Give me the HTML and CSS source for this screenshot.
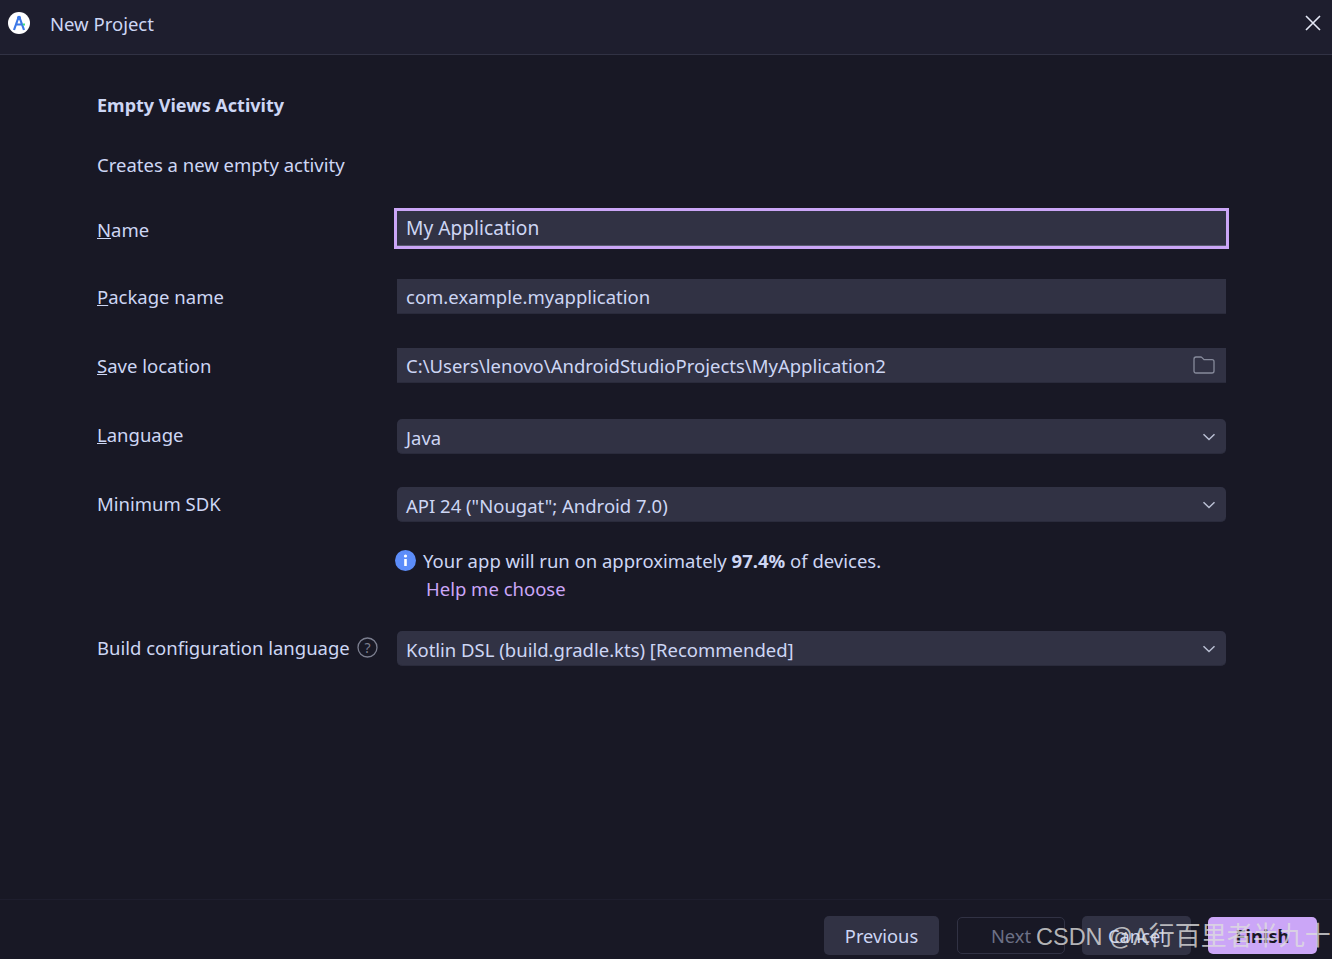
FILE: index.html
```html
<!DOCTYPE html>
<html lang="en">
<head>
    <meta charset="UTF-8">
    <meta name="viewport" content="width=device-width, initial-scale=1.0">
    <title>New Project</title>
    <link rel="stylesheet" href="styles.css">
</head>
<body>

    <div class="window">
        <!-- Title bar -->
        <div class="titlebar">
            <svg class="logo" width="22" height="22" viewBox="0 0 22 22">
                <circle cx="11" cy="11" r="11" fill="#fff"/>
                <path d="M11 4L6 18M11 4l5 14M8 12.500h6" fill="none" stroke="#3b78e7" stroke-width="2.200"/>
                <circle cx="11" cy="6" r="2" fill="#3b78e7"/>
                <path d="M14.500 11.500h2.500v2h-2z" fill="#3ddc84"/>
            </svg>
            <span class="title">New Project</span>
            <svg class="close" width="16" height="16" viewBox="0 0 16 16">
                <path d="M1 1l14 14M15 1L1 15" stroke="#e4e8f6" stroke-width="1.600" fill="none"/>
            </svg>
        </div>

        <!-- Form -->
        <div class="content">
            <h1>Empty Views Activity</h1>
            <p class="desc">Creates a new empty activity</p>

            <div class="row row-name">
                <label><u>N</u>ame</label>
                <div class="field focused">My Application</div>
            </div>
            <div class="row row-package">
                <label><u>P</u>ackage name</label>
                <div class="field">com.example.myapplication</div>
            </div>
            <div class="row row-save">
                <label><u>S</u>ave location</label>
                <div class="field">
                    <span>C:\Users\lenovo\AndroidStudioProjects\MyApplication2</span>
                    <svg width="22" height="18" viewBox="0 0 22 18">
                        <path d="M1 3.200C1 2 1.800 1 3 1h4.600c.6 0 1 .2 1.400.6L11 3.600h8c1.200 0 2 .8 2 2V15c0 1.200-.8 2-2 2H3c-1.200 0-2-.8-2-2z" fill="none" stroke="#868a9b" stroke-width="1.300"/>
                    </svg>
                </div>
            </div>
            <div class="row row-language">
                <label><u>L</u>anguage</label>
                <div class="field select">
                    <span>Java</span>
                    <svg class="chevron" width="14" height="8" viewBox="0 0 14 8"><path d="M1.500 1.200L7 6.500l5.500-5.300" fill="none" stroke="#b9bfd3" stroke-width="1.500"/></svg>
                </div>
            </div>
            <div class="row row-sdk">
                <label>Minimum SDK</label>
                <div class="field select">
                    <span>API 24 ("Nougat"; Android 7.0)</span>
                    <svg class="chevron" width="14" height="8" viewBox="0 0 14 8"><path d="M1.500 1.200L7 6.500l5.500-5.300" fill="none" stroke="#b9bfd3" stroke-width="1.500"/></svg>
                </div>
            </div>

            <div class="info">
                <div class="info-line">
                    <svg width="21" height="21" viewBox="0 0 21 21">
                        <circle cx="10.500" cy="10.500" r="10.500" fill="#5c8dfa"/>
                        <rect x="9.200" y="9" width="2.600" height="7" fill="#fff"/>
                        <circle cx="10.500" cy="6" r="1.600" fill="#fff"/>
                    </svg>
                    <span>Your app will run on approximately <b>97.4%</b> of devices.</span>
                </div>
                <a class="help">Help me choose</a>
            </div>

            <div class="row row-build">
                <label><span>Build configuration language</span><svg width="21" height="21" viewBox="0 0 21 21">
                        <circle cx="10.500" cy="10.500" r="9.500" fill="none" stroke="#7b7e8f" stroke-width="1.300"/>
                        <text x="10.500" y="15.500" text-anchor="middle" class="qmark">?</text>
                    </svg></label>
                <div class="field select">
                    <span>Kotlin DSL (build.gradle.kts) [Recommended]</span>
                    <svg class="chevron" width="14" height="8" viewBox="0 0 14 8"><path d="M1.500 1.200L7 6.500l5.500-5.300" fill="none" stroke="#b9bfd3" stroke-width="1.500"/></svg>
                </div>
            </div>
        </div>

        <!-- Buttons -->
        <div class="footer">
            <button class="previous">Previous</button>
            <button class="next" disabled>Next</button>
            <button class="cancel">Cancel</button>
            <button class="finish">Finish</button>
        </div>
    </div>

    <div class="watermark">CSDN @A<span>行百里者半九十</span></div>

</body>
</html>
```

FILE: styles.css
```css
html, body {
    margin: 0;
    padding: 0;
    height: 100%;
    overflow: hidden;
}
body {
    font-family: "Noto Sans", "Noto Sans CJK SC", sans-serif;
    font-size: 18.5px;
    color: #cdd6f4;
    background-color: #181825;
}
.window {
    display: flex;
    flex-direction: column;
    height: 959px;
}
.titlebar {
    display: flex;
    align-items: center;
    height: 55px;
    padding: 0 10px 8px 8px;
    background-color: #1e1e2e;
    border-bottom: 1px solid #313244;
    box-sizing: border-box;
    flex-shrink: 0;
}
.title {
    margin-left: 20px;
    flex: 1;
}
.close {
    margin-right: 1px;
}
.content {
    flex: 1;
    padding: 0 106px 0 97px;
}
h1 {
    font-size: 18px;
    font-weight: 700;
    line-height: 26px;
    margin: 37px 0 0;
}
.desc {
    line-height: 26px;
    margin: 34px 0 0;
}
.row {
    display: flex;
    align-items: center;
    height: 35px;
}
.row label {
    display: flex;
    align-items: center;
    width: 300px;
    flex-shrink: 0;
    white-space: nowrap;
}
.row label svg {
    margin-left: 7px;
}
.row-name { margin-top: 34px; }
.row-package { margin-top: 32px; }
.row-save { margin-top: 34px; }
.row-language { margin-top: 36px; }
.row-sdk { margin-top: 33px; }
.row-build { margin-top: 29px; }
.row-language label { margin-bottom: 4px; }
.row-sdk label { margin-bottom: 2px; }
.row-build label { margin-bottom: 2px; }
.field {
    flex: 1;
    display: flex;
    align-items: center;
    justify-content: space-between;
    height: 35px;
    box-sizing: border-box;
    padding: 0 11px 0 9px;
    background-color: #313244;
    border-bottom: 1px solid #2a2b3c;
}
.field.focused {
    font-size: 19.2px;
    outline: 3px solid #cba6f7;
    outline-offset: 0;
    border-bottom: 1px solid #585b70;
    margin-top: -3px;
}
.field.select {
    padding-top: 2px;
    border-radius: 5px;
}
.chevron {
    margin-right: -1px;
}
.info {
    margin: 25px 0 0 298px;
}
.info-line {
    display: flex;
    align-items: center;
    gap: 7px;
    height: 26px;
}
.help {
    display: block;
    margin: 3px 0 0 31px;
    line-height: 26px;
    color: #cba6f7;
}
.qmark {
    font-size: 14px;
    fill: #7b7e8f;
}
.footer {
    display: flex;
    justify-content: flex-end;
    gap: 17px;
    height: 60px;
    padding: 16px 15px 0 0;
    box-sizing: border-box;
    border-top: 1px solid #1e1e2e;
    flex-shrink: 0;
}
button {
    font-family: inherit;
    font-size: 18.3px;
    width: 115px;
    height: 39px;
    padding: 0;
    border: none;
    border-radius: 5px;
    color: #cdd6f4;
    background-color: #313244;
}
button.previous {
    margin-right: 1px;
}
button.next {
    width: 108px;
    height: 37px;
    margin-top: 1px;
    color: #6c7086;
    background-color: transparent;
    border: 1px solid #313244;
}
button.cancel {
    width: 109px;
}
button.finish {
    width: 109px;
    height: 37px;
    margin-top: 1px;
    font-weight: 700;
    color: #181825;
    background-color: #cba6f7;
}
.watermark {
    position: absolute;
    left: 1036px;
    top: 920px;
    font-family: "Liberation Sans", "Noto Sans CJK SC", sans-serif;
    font-size: 23.5px;
    line-height: 32px;
    white-space: nowrap;
    color: rgba(222, 222, 222, 0.8);
}
.watermark span {
    font-size: 26px;
}
```
